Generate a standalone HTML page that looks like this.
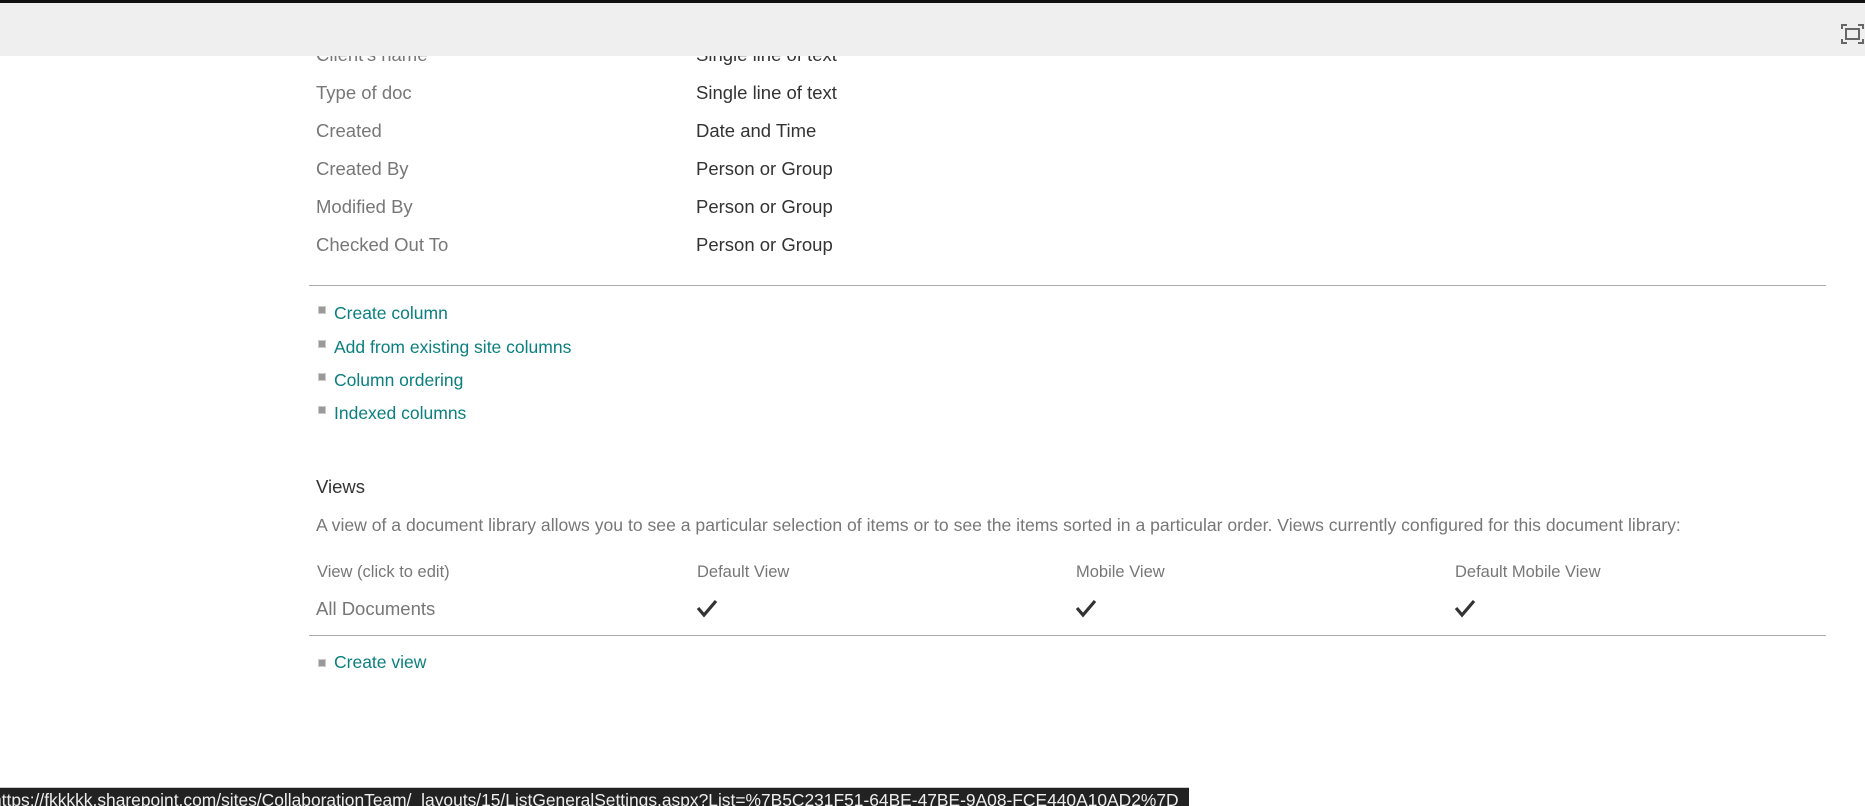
<!DOCTYPE html>
<html><head><meta charset="utf-8"><style>
html,body{margin:0;padding:0;width:1865px;height:805px;overflow:hidden;background:#fff;font-family:"Liberation Sans",sans-serif;}
.a{position:absolute;white-space:nowrap;line-height:1;}
.l{color:#777;font-size:18.5px;left:316px;}
.r{color:#333;font-size:18.5px;left:696px;}
.lk{color:#0b7f7f;font-size:17.5px;left:334px;}
.b{position:absolute;left:318px;width:6px;height:6px;background:#999;border:1px solid #ccc;box-sizing:content-box;}
.h{color:#777;font-size:16.5px;}
.ck{position:absolute;width:22px;height:20px;}
</style></head><body>
<div class="a l" style="top:46px">Client's name</div>
<div class="a r" style="top:46px">Single line of text</div>
<div style="position:absolute;left:0;top:0;width:1865px;height:3px;background:#111"></div>
<div style="position:absolute;left:0;top:3px;width:1865px;height:53px;background:#efefef"></div>
<svg style="position:absolute;left:1840px;top:23px" width="25" height="22" viewBox="0 0 25 22"><path d="M2 6V2h5M18 2h5v4M2 16v4h5M18 20h5v-4" fill="none" stroke="#666" stroke-width="2"/><rect x="6" y="6" width="13" height="10" fill="none" stroke="#666" stroke-width="2"/></svg>

<div class="a l" style="top:84px">Type of doc</div><div class="a r" style="top:84px">Single line of text</div>
<div class="a l" style="top:122px">Created</div><div class="a r" style="top:122px">Date and Time</div>
<div class="a l" style="top:160px">Created By</div><div class="a r" style="top:160px">Person or Group</div>
<div class="a l" style="top:198px">Modified By</div><div class="a r" style="top:198px">Person or Group</div>
<div class="a l" style="top:236px">Checked Out To</div><div class="a r" style="top:236px">Person or Group</div>

<div style="position:absolute;left:309px;top:285px;width:1517px;height:1px;background:#ababab"></div>

<div class="b" style="top:306px"></div><div class="a lk" style="top:305px">Create column</div>
<div class="b" style="top:340px"></div><div class="a lk" style="top:339px">Add from existing site columns</div>
<div class="b" style="top:373px"></div><div class="a lk" style="top:372px">Column ordering</div>
<div class="b" style="top:406px"></div><div class="a lk" style="top:405px">Indexed columns</div>

<div class="a" style="left:316px;top:478px;font-size:18.5px;color:#333">Views</div>
<div class="a" style="left:316px;top:517px;font-size:17.6px;color:#777">A view of a document library allows you to see a particular selection of items or to see the items sorted in a particular order. Views currently configured for this document library:</div>

<div class="a h" style="left:317px;top:564px">View (click to edit)</div>
<div class="a h" style="left:697px;top:564px">Default View</div>
<div class="a h" style="left:1076px;top:564px">Mobile View</div>
<div class="a h" style="left:1455px;top:564px">Default Mobile View</div>

<div class="a" style="left:316px;top:600px;font-size:18.5px;color:#777">All Documents</div>
<svg class="ck" style="left:696px;top:598px" viewBox="0 0 22 20"><path d="M2 10l6 7L20 3" fill="none" stroke="#333" stroke-width="3.2"/></svg>
<svg class="ck" style="left:1075px;top:598px" viewBox="0 0 22 20"><path d="M2 10l6 7L20 3" fill="none" stroke="#333" stroke-width="3.2"/></svg>
<svg class="ck" style="left:1454px;top:598px" viewBox="0 0 22 20"><path d="M2 10l6 7L20 3" fill="none" stroke="#333" stroke-width="3.2"/></svg>

<div style="position:absolute;left:309px;top:635px;width:1517px;height:1px;background:#ababab"></div>
<div class="b" style="top:659px"></div><div class="a lk" style="top:654px">Create view</div>

<div style="position:absolute;left:0;top:787px;width:1189px;height:18px;background:#222;border-top:1px solid #ccc;overflow:hidden">
<div class="a" style="left:-8px;top:4px;font-size:17.4px;color:#eee">https://fkkkkk.sharepoint.com/sites/CollaborationTeam/_layouts/15/ListGeneralSettings.aspx?List=%7B5C231F51-64BE-47BE-9A08-FCE440A10AD2%7D</div>
</div>
</body></html>
